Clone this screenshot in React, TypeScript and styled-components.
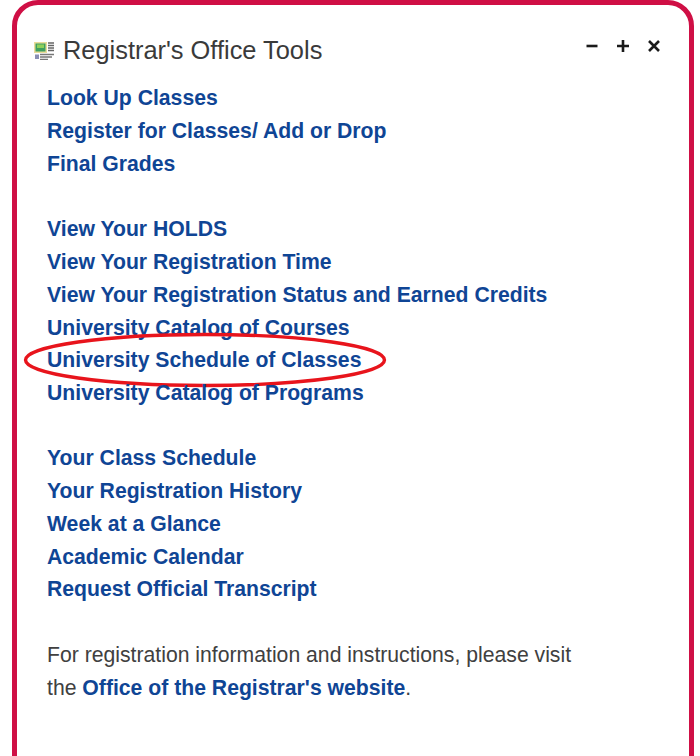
import styled, { createGlobalStyle } from "styled-components";

const GlobalStyle = createGlobalStyle`
  html, body {
    margin: 0;
    padding: 0;
    background: #fff;
    overflow: hidden;
  }
  body {
    font-family: "Liberation Sans", Arial, sans-serif;
  }
`;

const Page = styled.div`
  height: 756px;
  overflow: hidden;
  padding-left: 12px;
  padding-right: 6px;
`;

const Portlet = styled.section`
  box-sizing: border-box;
  height: 800px;
  border: 5px solid #cf0f45;
  border-radius: 26px;
  padding: 27px 28px 0 17px;
`;

const Header = styled.header`
  display: flex;
  align-items: center;
  justify-content: space-between;
  height: 36px;
`;

const Title = styled.h2`
  display: flex;
  align-items: center;
  gap: 8px;
  margin: 0;
  font-size: 25.4px;
  font-weight: 400;
  color: #3a3a3a;
`;

const Controls = styled.div`
  display: flex;
  align-items: center;
  gap: 17px;
  margin-top: -8px;
`;

const Body = styled.div`
  padding: 14.4px 0 0 13px;
  font-size: 21.2px;
  line-height: 32.74px;
`;

const LinkGroup = styled.ul`
  list-style: none;
  margin: 0 0 32.74px;
  padding: 0;
`;

const LinkItem = styled.li`
  position: relative;
`;

const Link = styled.a`
  color: #0f4595;
  font-weight: 700;
  text-decoration: none;
`;

const Note = styled.p`
  margin: 0;
  color: #404040;
`;

const Highlight = styled.svg`
  position: absolute;
  left: -24px;
  top: -12px;
  width: 364px;
  height: 56px;
  pointer-events: none;
`;

const NewsIcon = () => (
  <svg width="21" height="19" viewBox="0 0 21 19" aria-hidden="true">
    <rect x="0" y="1" width="13" height="11" fill="#e9dc9a" />
    <rect x="1.5" y="2.5" width="10" height="8" fill="#3fa060" />
    <rect x="3" y="3.5" width="7" height="3.5" fill="#8fd05a" />
    <path d="M14 2h6M14 4.5h6M14 7h6M14 9.5h6" stroke="#666" strokeWidth="1.3" />
    <rect x="1" y="13.5" width="4" height="4.5" fill="#8a8fb5" />
    <path d="M6 13.5h14M6 16h12M6 18.5h8" stroke="#777" strokeWidth="1.3" />
  </svg>
);

const MinusIcon = () => (
  <svg width="14" height="14" viewBox="0 0 14 14" aria-hidden="true">
    <path d="M1.5 7h11" stroke="#1a1a1a" strokeWidth="2.6" />
  </svg>
);

const PlusIcon = () => (
  <svg width="14" height="14" viewBox="0 0 14 14" aria-hidden="true">
    <path d="M1 7h12M7 1v12" stroke="#1a1a1a" strokeWidth="2.6" />
  </svg>
);

const CloseIcon = () => (
  <svg width="14" height="14" viewBox="0 0 14 14" aria-hidden="true">
    <path d="M2 2l10 10M12 2L2 12" stroke="#1a1a1a" strokeWidth="2.6" />
  </svg>
);

const groups = [
  ["Look Up Classes", "Register for Classes/ Add or Drop", "Final Grades"],
  [
    "View Your HOLDS",
    "View Your Registration Time",
    "View Your Registration Status and Earned Credits",
    "University Catalog of Courses",
    "University Schedule of Classes",
    "University Catalog of Programs",
  ],
  [
    "Your Class Schedule",
    "Your Registration History",
    "Week at a Glance",
    "Academic Calendar",
    "Request Official Transcript",
  ],
];

const App = () => {
  return (
    <Page>
      <GlobalStyle />
      <Portlet>
        <Header>
          <Title>
            <NewsIcon />
            Registrar's Office Tools
          </Title>
          <Controls>
            <MinusIcon />
            <PlusIcon />
            <CloseIcon />
          </Controls>
        </Header>
        <Body>
          {groups.map((links) => (
            <LinkGroup key={links[0]}>
              {links.map((label) => (
                <LinkItem key={label}>
                  <Link href="#">{label}</Link>
                  {label === "University Schedule of Classes" && (
                    <Highlight viewBox="0 0 364 56">
                      <ellipse cx="182" cy="28" rx="179.5" ry="25.5" fill="none" stroke="#e8141c" strokeWidth="3.4" />
                    </Highlight>
                  )}
                </LinkItem>
              ))}
            </LinkGroup>
          ))}
          <Note>
            For registration information and instructions, please visit
            <br />
            the <Link href="#">Office of the Registrar's website</Link>.
          </Note>
        </Body>
      </Portlet>
    </Page>
  );
};

export default App;
